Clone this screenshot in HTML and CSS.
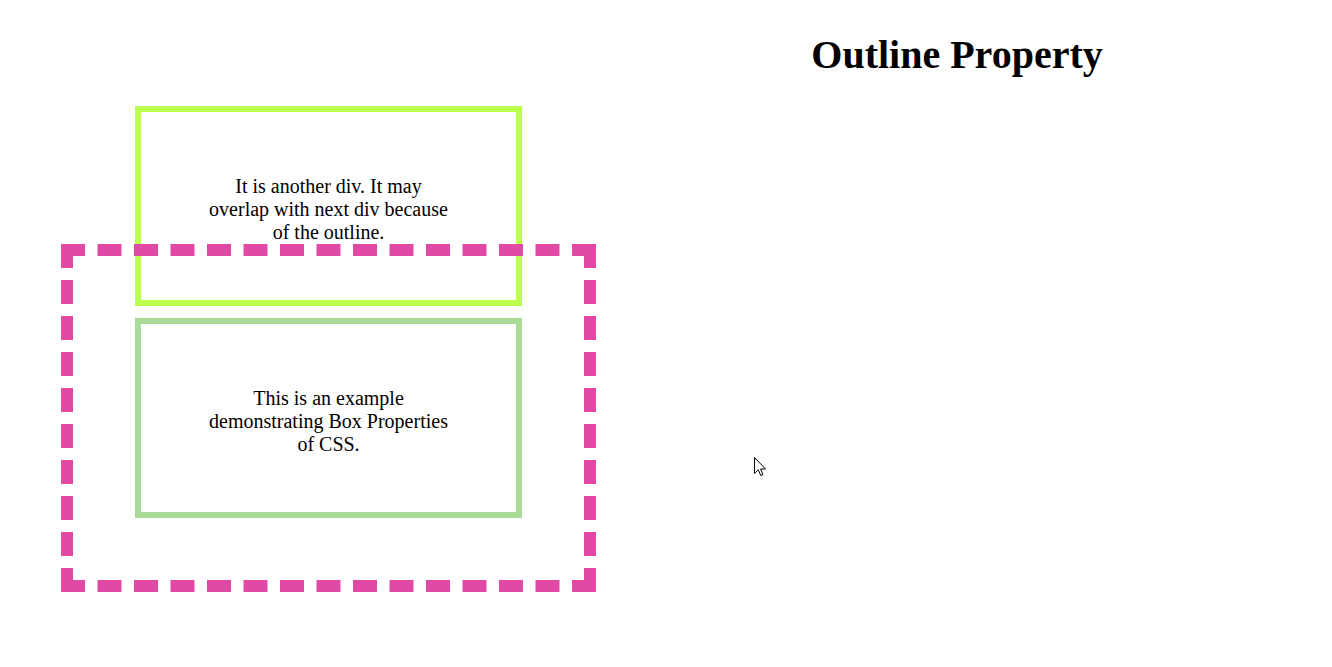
FILE: index.html
```html
<!DOCTYPE html>
<html>
<head>
<meta charset="utf-8">
<link rel="stylesheet" href="styles.css">
</head>
<body>
<div class="boxes">
  <div class="box box-one">It is another div. It may overlap with next div because of the outline.</div>
  <div class="box box-two">This is an example demonstrating Box Properties of CSS.</div>
</div>
<h1 class="title">Outline Property</h1>
<svg class="cursor" width="13" height="20" viewBox="0 0 13 20" aria-hidden="true">
  <path d="M0.5 0.5 L0.5 16.5 L4.3 12.8 L6.8 18.6 L9 17.6 L6.6 12 L11.5 12 Z" fill="#fff" stroke="#000" stroke-width="1" stroke-linejoin="miter"/>
</svg>
</body>
</html>
```

FILE: styles.css
```css
html, body {
  background: #ffffff;
}

body {
  margin: 8px;
  display: flex;
  align-items: flex-start;
  font-family: "Liberation Serif", "Times New Roman", serif;
  color: #000;
}

.boxes {
  width: 387px;
  padding: 98px 68px 100px 127px;
  flex: none;
}

.box {
  box-sizing: border-box;
  width: 387px;
  height: 200px;
  padding: 63px 62px 0 62px;
  text-align: center;
  font-size: 20px;
  line-height: 23px;
  border: 6px solid;
}

.box-one {
  border-color: #b9ff4b;
  margin-bottom: 12px;
}

.box-two {
  border-color: #a9dc98;
  outline: 12px dashed #e04aa6;
  outline-offset: 62px;
}

.title {
  flex: 1;
  margin: 24px 0 0 0;
  font-size: 40px;
  line-height: 46px;
  font-weight: bold;
  text-align: center;
}

.cursor {
  position: absolute;
  left: 754px;
  top: 457px;
}
```
